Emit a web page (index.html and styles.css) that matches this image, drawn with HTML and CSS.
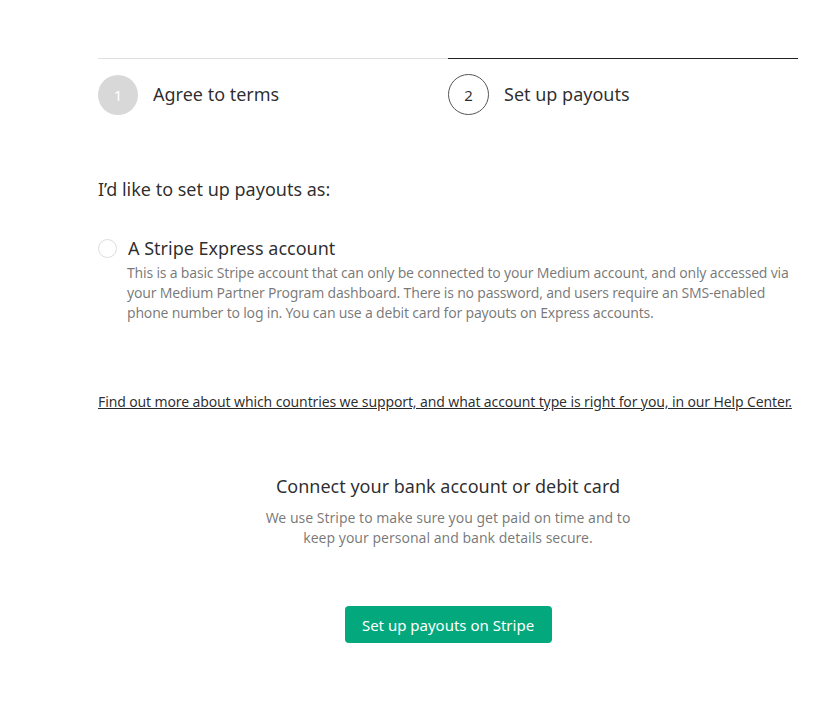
FILE: index.html
```html
<!DOCTYPE html>
<html lang="en">
<head>
  <meta charset="UTF-8" />
  <meta name="viewport" content="width=device-width, initial-scale=1.0" />
  <title>Set up payouts</title>
  <link rel="stylesheet" href="styles.css">
</head>
<body>
  <div class="page">
    <div class="steps">
      <div class="step done">
        <span class="step-num">1</span>
        <span class="step-label">Agree to terms</span>
      </div>
      <div class="step active">
        <span class="step-num">2</span>
        <span class="step-label">Set up payouts</span>
      </div>
    </div>

    <h2 class="question">I’d like to set up payouts as:</h2>

    <label class="option">
      <span class="radio"></span>
      <span class="option-body">
        <span class="option-title">A Stripe Express account</span>
        <span class="option-desc">This is a basic Stripe account that can only be connected to your Medium account, and only accessed via your Medium Partner Program dashboard. There is no password, and users require an SMS-enabled phone number to log in. You can use a debit card for payouts on Express accounts.</span>
      </span>
    </label>

    <a class="help-link" href="#">Find out more about which countries we support, and what account type is right for you, in our Help Center.</a>

    <div class="connect">
      <h3>Connect your bank account or debit card</h3>
      <p>We use Stripe to make sure you get paid on time and to<br>keep your personal and bank details secure.</p>
      <button type="button">Set up payouts on Stripe</button>
    </div>
  </div>
</body>
</html>
```

FILE: styles.css
```css
body {
  font-family: "Noto Sans", Arial, sans-serif;
  background: #fff;
  color: rgba(0,0,0,0.84);
  margin: 0;
}
.page {
  width: 700px;
  margin-left: 98px;
  padding-top: 58px;
}
.steps {
  display: flex;
}
.step {
  flex: 1;
  display: flex;
  align-items: center;
  padding-top: 15px;
  border-top: 1px solid #e0e0e0;
}
.step.active {
  border-top-color: #222;
}
.step-num {
  width: 40px;
  height: 40px;
  border-radius: 50%;
  display: flex;
  align-items: center;
  justify-content: center;
  font-size: 15px;
  box-sizing: border-box;
}
.done .step-num {
  background: #d8d8d8;
  color: #fff;
}
.active .step-num {
  border: 1px solid #555;
  width: 41px;
  height: 41px;
}
.step-label {
  margin-left: 15px;
  font-size: 18px;
  margin-top: -2px;
}
.question {
  font-size: 18px;
  font-weight: normal;
  margin: 61px 0 0;
  line-height: 26px;
}
.option {
  display: flex;
  margin-top: 33px;
}
.radio {
  width: 17px;
  height: 17px;
  border: 1px solid #ddd;
  border-radius: 50%;
  flex-shrink: 0;
  margin-top: 4px;
}
.option-body {
  margin-left: 12px;
  display: flex;
  flex-direction: column;
}
.option-title {
  font-size: 18px;
  line-height: 26px;
  margin-left: -1px;
}
.option-desc {
  font-size: 14px;
  line-height: 20px;
  letter-spacing: -0.2px;
  color: rgba(0,0,0,0.54);
  margin: 2px 0 0 -2px;
}
.help-link {
  display: block;
  margin-top: 69px;
  font-size: 14px;
  letter-spacing: -0.12px;
  color: rgba(0,0,0,0.84);
  white-space: nowrap;
}
.connect {
  text-align: center;
  margin-top: 62px;
}
.connect h3 {
  font-size: 18px;
  font-weight: normal;
  margin: 0;
  line-height: 26px;
}
.connect p {
  font-size: 14px;
  line-height: 20px;
  color: rgba(0,0,0,0.54);
  margin: 9px 0 0;
}
button {
  margin-top: 58px;
  background: #03a87c;
  color: #fff;
  border: none;
  border-radius: 4px;
  width: 207px;
  height: 37px;
  font-family: inherit;
  font-size: 15px;
  cursor: pointer;
}
```
